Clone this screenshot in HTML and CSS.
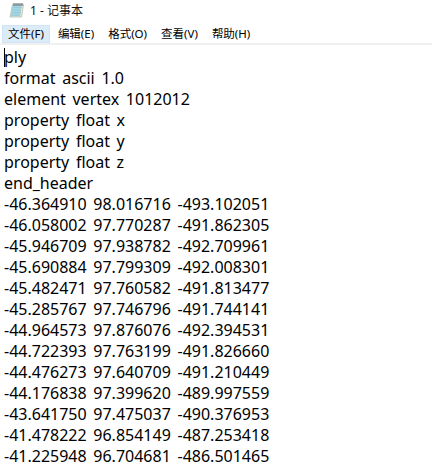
FILE: index.html
```html
<!DOCTYPE html>
<html lang="zh">
<head>
<meta charset="utf-8">
<title>1 - 记事本</title>
<link rel="stylesheet" href="styles.css">
</head>
<body>
<div class="window">
  <header class="titlebar">
    <svg class="app-icon" width="16" height="16" viewBox="0 0 16 16">
      <path d="M3.5 2.5h11l-2 12.5H1z" fill="#f3eecb" stroke="#9aa58f" stroke-width=".6"/>
      <path d="M3.5 3h9.5l-2 11.5H1.5z" fill="#a6d6e4"/>
      <path d="M3.5 5.5h9.2M3 8h9.2M2.6 10.5h9.2M2.2 13h9.2" stroke="#8fc3d6" stroke-width=".7"/>
      <path d="M5 1v3M7 1v3M9 1v3M11 1v3M13 1v3" stroke="#5c6a72" stroke-width="1"/>
    </svg>
    <span class="title">1 - 记事本</span>
  </header>
  <nav class="menubar">
    <span class="menu active">文件(F)</span>
    <span class="menu">编辑(E)</span>
    <span class="menu">格式(O)</span>
    <span class="menu">查看(V)</span>
    <span class="menu">帮助(H)</span>
  </nav>
  <main class="editor"><span class="caret"></span><pre class="text">ply
format ascii 1.0
element vertex 1012012
property float x
property float y
property float z
end_header
-46.364910 98.016716 -493.102051
-46.058002 97.770287 -491.862305
-45.946709 97.938782 -492.709961
-45.690884 97.799309 -492.008301
-45.482471 97.760582 -491.813477
-45.285767 97.746796 -491.744141
-44.964573 97.876076 -492.394531
-44.722393 97.763199 -491.826660
-44.476273 97.640709 -491.210449
-44.176838 97.399620 -489.997559
-43.641750 97.475037 -490.376953
-41.478222 96.854149 -487.253418
-41.225948 96.704681 -486.501465</pre></main>
</div>
</body>
</html>
```
FILE: styles.css
```css
html, body { margin: 0; padding: 0; background: #fff; }
.window { width: 432px; height: 468px; overflow: hidden; display: flex; flex-direction: column; font-family: "Noto Sans", "Noto Sans CJK SC", sans-serif; color: #000; }
.titlebar { height: 20px; padding: 0 0 5px 9px; display: flex; align-items: center; gap: 5px; font-size: 12px; box-sizing: content-box; }
.title { color: #111; }
.menubar { height: 18px; padding-left: 2px; display: flex; font-size: 11.5px; border-bottom: 2px solid #f0f0f0; }
.menu { padding: 0 6px; line-height: 18px; margin-right: 2px; }
.menu.active { background: #dcebf8; box-shadow: inset 0 0 0 1px #cfe5f7; }
.editor { position: relative; flex: 1; padding: 2px 0 0 4px; }
.text { margin: 0; font-family: "Noto Sans", sans-serif; font-size: 16px; line-height: 21px; word-spacing: 2.5px; }
.caret { position: absolute; left: 4px; top: 3px; width: 1px; height: 19px; background: #000; }
```
